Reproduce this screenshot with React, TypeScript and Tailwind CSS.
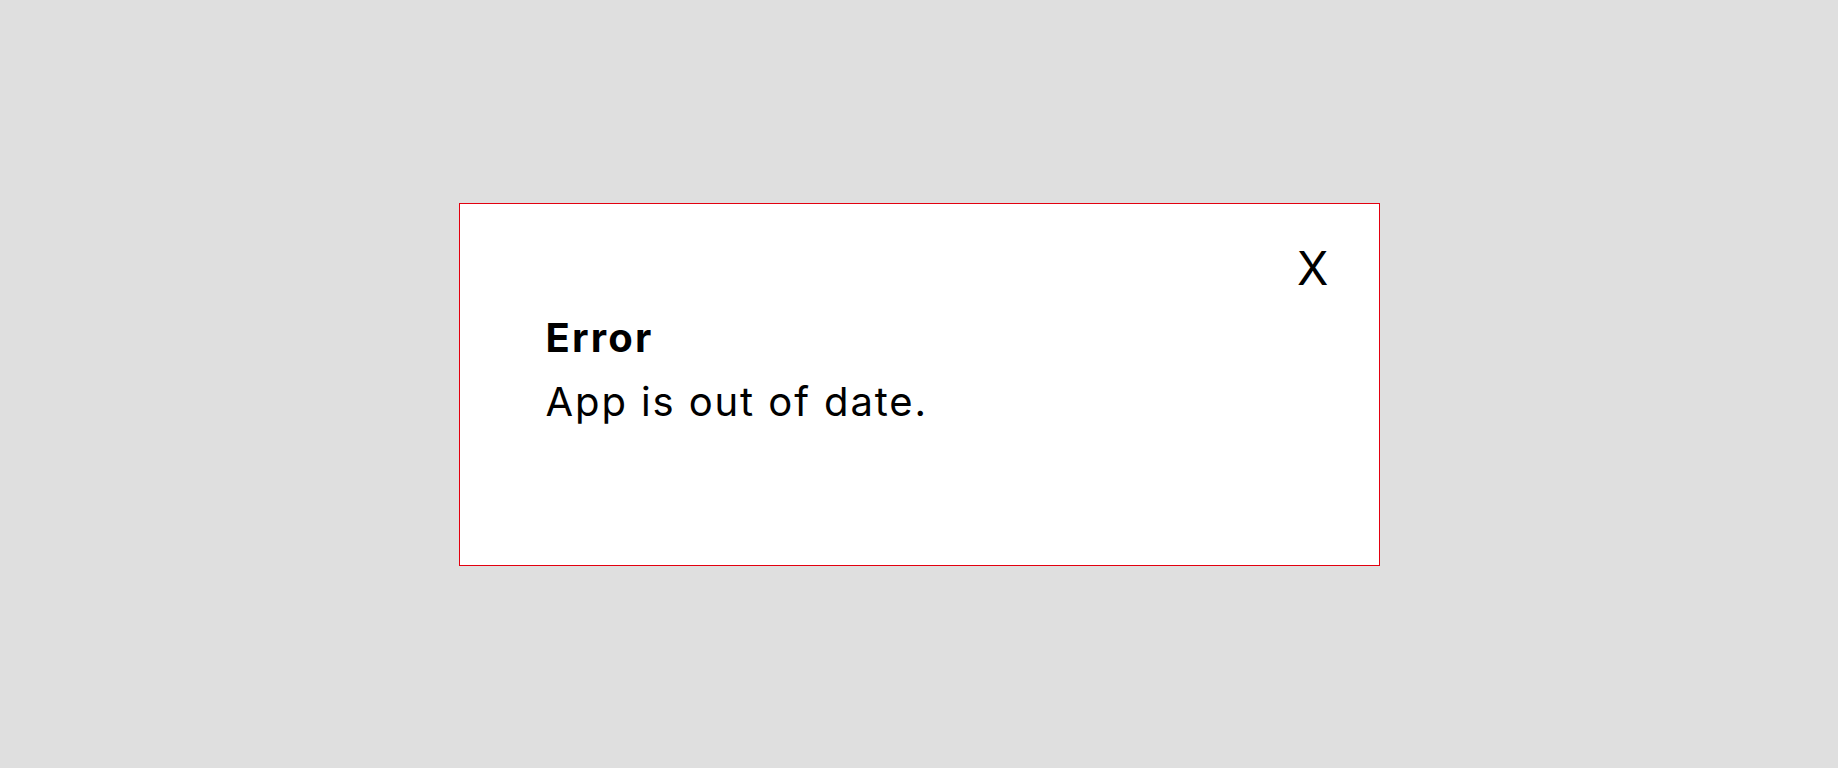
export default function App() {
  return (
    <div className="w-full h-[768px] bg-[#dfdfdf] flex items-center justify-center" style={{ fontFamily: "Inter, 'Noto Sans', sans-serif" }}>
      <div className="relative w-[921px] h-[363px] bg-white border border-[#e3000f] pl-[86px] pt-[101px]">
        <button className="absolute right-[50px] top-[41px] text-[46px] leading-none text-black font-normal">X</button>
        <div className="text-[40px] leading-[65px] font-bold text-black tracking-[2.2px]">Error</div>
        <div className="text-[40px] leading-[63px] font-normal text-black tracking-[1.9px]">App is out of date.</div>
      </div>
    </div>
  );
}
